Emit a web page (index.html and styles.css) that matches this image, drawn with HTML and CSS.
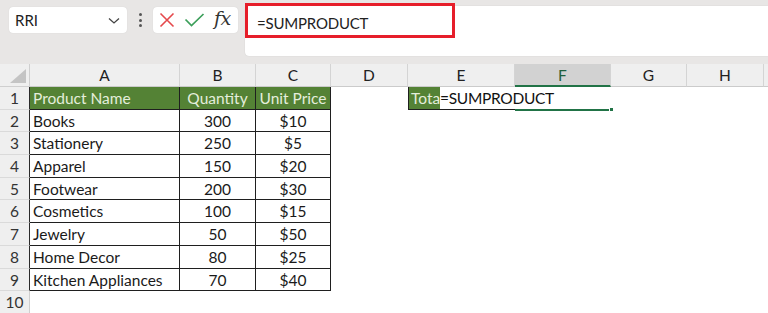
FILE: index.html
```html
<!DOCTYPE html>
<html>
<head>
<meta charset="utf-8">
<link rel="stylesheet" href="styles.css">
</head>
<body>
<div class="app">
  <div class="topbar">
    <div class="namebox">
      <span class="name">RRI</span>
      <svg class="chev" width="12" height="8" viewBox="0 0 12 8"><polyline points="1,1.5 6,6 11,1.5" fill="none" stroke="#444" stroke-width="1.3"/></svg>
    </div>
    <div class="dots"><span></span><span></span><span></span></div>
    <div class="btns">
      <svg width="16" height="16" viewBox="0 0 16 16"><path d="M1.5 1.5 L14.5 14.5 M14.5 1.5 L1.5 14.5" stroke="#e5494c" stroke-width="1.6" fill="none"/></svg>
      <svg width="21" height="14" viewBox="0 0 21 14"><polyline points="1.5,6.5 7.5,12.5 19.5,1" fill="none" stroke="#3c9f5a" stroke-width="1.7"/></svg>
      <span class="fx">fx</span>
    </div>
    <div class="formula">
      <span class="ftext">=SUMPRODUCT</span>
      <div class="redbox"></div>
    </div>
  </div>
  <div class="grid">
    <div class="corner"><svg width="16" height="14" viewBox="0 0 16 14"><polygon points="16,0 16,14 0,14" fill="#c4c4c4"/></svg></div>
    <div class="ch">A</div><div class="ch">B</div><div class="ch">C</div><div class="ch">D</div><div class="ch">E</div><div class="ch sel">F</div><div class="ch">G</div><div class="ch">H</div><div class="ch last"></div>

    <div class="rh t">1</div><div class="c tb hd">Product Name</div><div class="c tb hd ctr">Quantity</div><div class="c tb hd ctr">Unit Price</div><div class="c"></div>
    <div class="c e1"><span class="tota">Tota</span><div class="editor">=SUMPRODUCT</div></div>
    <div class="c f1"><span class="handle"></span></div><div class="c"></div><div class="c"></div><div class="c"></div>

    <div class="rh t">2</div><div class="c tb">Books</div><div class="c tb ctr">300</div><div class="c tb ctr">$10</div><div class="c"></div><div class="c"></div><div class="c"></div><div class="c"></div><div class="c"></div><div class="c"></div>
    <div class="rh t">3</div><div class="c tb">Stationery</div><div class="c tb ctr">250</div><div class="c tb ctr">$5</div><div class="c"></div><div class="c"></div><div class="c"></div><div class="c"></div><div class="c"></div><div class="c"></div>
    <div class="rh t">4</div><div class="c tb">Apparel</div><div class="c tb ctr">150</div><div class="c tb ctr">$20</div><div class="c"></div><div class="c"></div><div class="c"></div><div class="c"></div><div class="c"></div><div class="c"></div>
    <div class="rh t">5</div><div class="c tb">Footwear</div><div class="c tb ctr">200</div><div class="c tb ctr">$30</div><div class="c"></div><div class="c"></div><div class="c"></div><div class="c"></div><div class="c"></div><div class="c"></div>
    <div class="rh t">6</div><div class="c tb">Cosmetics</div><div class="c tb ctr">100</div><div class="c tb ctr">$15</div><div class="c"></div><div class="c"></div><div class="c"></div><div class="c"></div><div class="c"></div><div class="c"></div>
    <div class="rh t">7</div><div class="c tb">Jewelry</div><div class="c tb ctr">50</div><div class="c tb ctr">$50</div><div class="c"></div><div class="c"></div><div class="c"></div><div class="c"></div><div class="c"></div><div class="c"></div>
    <div class="rh t">8</div><div class="c tb">Home Decor</div><div class="c tb ctr">80</div><div class="c tb ctr">$25</div><div class="c"></div><div class="c"></div><div class="c"></div><div class="c"></div><div class="c"></div><div class="c"></div>
    <div class="rh t">9</div><div class="c tb">Kitchen Appliances</div><div class="c tb ctr">70</div><div class="c tb ctr">$40</div><div class="c"></div><div class="c"></div><div class="c"></div><div class="c"></div><div class="c"></div><div class="c"></div>
    <div class="rh">10</div><div class="c"></div><div class="c"></div><div class="c"></div><div class="c"></div><div class="c"></div><div class="c"></div><div class="c"></div><div class="c"></div><div class="c"></div>
  </div>
</div>
</body>
</html>
```

FILE: styles.css
```css
* { box-sizing: border-box; }
html, body { margin: 0; padding: 0; }
body {
  width: 768px;
  height: 313px;
  overflow: hidden;
  background: #e8e6e5;
  font-family: "Lato", "Liberation Sans", sans-serif;
  color: #1a1a1a;
}
.app { display: flex; flex-direction: column; }
.topbar {
  height: 64px;
  display: flex;
  align-items: flex-start;
  padding: 7px 0 0 9px;
}
.namebox {
  width: 118px;
  height: 26px;
  background: #fff;
  border-radius: 4px;
  box-shadow: 0 0 1px rgba(0,0,0,0.15);
  display: flex;
  align-items: center;
  justify-content: space-between;
  padding: 0 7px 0 6px;
}
.name { font-size: 15px; color: #222; }
.chev { margin-top: 1px; }
.dots {
  width: 26px;
  height: 26px;
  display: flex;
  flex-direction: column;
  align-items: center;
  justify-content: center;
  gap: 2.5px;
}
.dots span { width: 3px; height: 3px; background: #555; border-radius: 50%; }
.btns {
  width: 85px;
  height: 26px;
  background: #fff;
  border-radius: 4px;
  box-shadow: 0 0 1px rgba(0,0,0,0.15);
  display: flex;
  align-items: center;
  padding: 0 0 0 6px;
  gap: 9px;
}
.fx {
  font-family: "DejaVu Serif", "Liberation Serif", serif;
  font-style: italic;
  font-size: 19px;
  color: #333;
  margin-left: 0;
  margin-top: -4px;
  letter-spacing: -0.5px;
}
.formula {
  position: relative;
  flex: 1;
  margin-left: 7px;
  margin-top: -1px;
  height: 50px;
  background: #fff;
  border-radius: 4px 0 0 4px;
  box-shadow: 0 0 1px rgba(0,0,0,0.2);
  padding: 6px 0 0 12px;
}
.ftext { font-size: 15px; color: #222; line-height: 22px; letter-spacing: -0.2px; }
.redbox {
  position: absolute;
  left: 0;
  top: -3px;
  width: 210px;
  height: 35px;
  border: 3px solid #e61e2a;
}
.grid {
  display: grid;
  grid-template-columns: 30px 150px 76px 75px 77px 107px 96px 76px 77px 1fr;
  grid-template-rows: 23px repeat(10, 22.7px);
  background: #fff;
  font-size: 15.5px;
  height: 249px;
}
.corner {
  background: #efefef;
  border-right: 1px solid #cfcfcf;
  border-bottom: 1px solid #cfcfcf;
  display: flex;
  align-items: flex-end;
  justify-content: flex-end;
  padding: 0 3px 3px 0;
}
.ch {
  background: #efefef;
  border-right: 1px solid #d4d4d4;
  border-bottom: 1px solid #cbcbcb;
  text-align: center;
  line-height: 22px;
  color: #222;
}
.ch.last { border-right: none; }
.ch.sel {
  background: #d2d2d2;
  border-bottom: 2px solid #217346;
  color: #1f5f3c;
}
.rh {
  background: #efefef;
  border-right: 1px solid #cfcfcf;
  border-bottom: 1px solid #dadada;
  text-align: center;
  line-height: 22px;
  color: #333;
}
.rh.t { border-right-color: #2a2a2a; }
.c {
  line-height: 22px;
  padding-left: 3px;
  white-space: nowrap;
  overflow: visible;
}
.tb {
  border-right: 1px solid #1f1f1f;
  border-bottom: 1px solid #1f1f1f;
}
.ctr { text-align: center; padding-left: 0; }
.hd { background: #548235; color: #e4eedc; }
.e1 {
  position: relative;
  background: #548235;
  border-left: 1px solid #1f1f1f;
  border-bottom: 1px solid #1f1f1f;
  color: #e4eedc;
  padding-left: 2px;
}
.editor {
  position: absolute;
  left: 31px;
  top: 0;
  width: 170px;
  height: 21.7px;
  background: #fff;
  color: #111;
  padding-left: 0;
  line-height: 22px;
  letter-spacing: -0.3px;
  z-index: 2;
}
.f1 {
  position: relative;
  border-bottom: 2px solid #217346;
  z-index: 1;
  margin-bottom: -1px;
}
.handle {
  position: absolute;
  right: -3px;
  bottom: -3px;
  width: 5px;
  height: 5px;
  background: #217346;
  border: 1px solid #fff;
}
```
